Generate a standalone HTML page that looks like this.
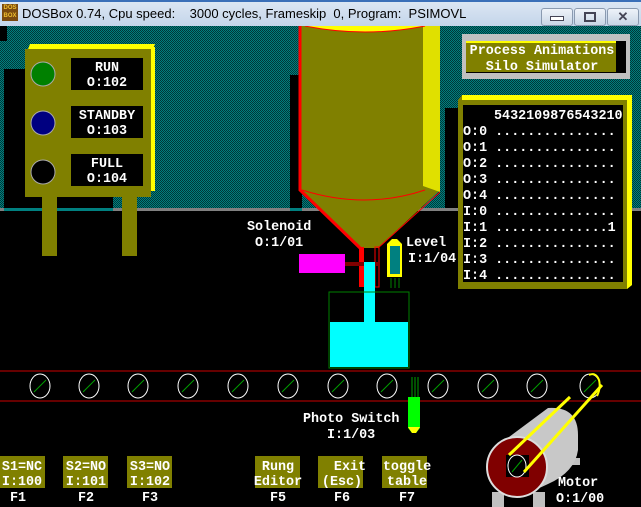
<!DOCTYPE html>
<html><head><style>
html,body{margin:0;padding:0;background:#000;width:641px;height:507px;overflow:hidden}
#tb{position:absolute;left:0;top:0;width:641px;height:26px;background:linear-gradient(#dbe6f3,#c4d5ea);border-top:2px solid #3a6fb8;box-sizing:border-box;font-family:"Liberation Sans",sans-serif;font-size:13px;color:#000}
svg text{font-family:"Liberation Mono",monospace;font-weight:bold;fill:#fff;font-size:13.4px}
.b{position:absolute;top:6px;width:30px;height:16px;border:1px solid #8a9ab0;border-radius:3px;background:linear-gradient(#eef3f9,#c9d6e6)}
</style></head><body>
<div id="tb">
<div style="position:absolute;left:2px;top:2px;width:16px;height:17px;background:#7a4a10;color:#f0c030;font-size:6px;line-height:8px;text-align:center;font-weight:bold">DOS<br>BOX</div>
<div style="position:absolute;left:22px;top:4px;white-space:pre">DOSBox 0.74, Cpu speed:    3000 cycles, Frameskip  0, Program:  PSIMOVL</div>
<div class="b" style="left:541px"><div style="margin:7px auto;width:12px;height:3px;border:1px solid #445;background:#fff"></div></div>
<div class="b" style="left:574px"><div style="margin:3px auto;width:8px;height:6px;border:2px solid #445"></div></div>
<div class="b" style="left:607px;text-align:center;font-weight:bold;line-height:15px;color:#445">✕</div>
</div>
<svg width="641" height="481" viewBox="0 26 641 481" style="position:absolute;left:0;top:26px">
<defs><pattern id="d" width="2" height="2" patternUnits="userSpaceOnUse"><rect width="2" height="2" fill="#008080"/><rect width="1" height="1" fill="#003838"/><rect x="1" y="1" width="1" height="1" fill="#003838"/></pattern></defs>
<rect x="0" y="26" width="641" height="184" fill="url(#d)"/>
<rect x="0" y="26" width="7" height="15" fill="#000"/>
<rect x="4" y="69" width="109" height="141" fill="#000"/>
<rect x="290" y="75" width="12" height="135" fill="#000"/>
<rect x="445" y="108" width="20" height="102" fill="#000"/>
<rect x="0" y="208" width="641" height="3" fill="#808080"/>
<rect x="4" y="208" width="109" height="3" fill="#008080"/><rect x="290" y="208" width="12" height="3" fill="#008080"/>
<!-- sign -->
<rect x="42" y="196" width="15" height="60" fill="#808000"/><rect x="122" y="196" width="15" height="60" fill="#808000"/>
<polygon points="25,57 30,44 155,44 150,57" fill="#ffff00"/>
<rect x="150" y="47" width="5" height="144" fill="#ffff00"/>
<rect x="25" y="49" width="126" height="148" fill="#808000"/>
<circle cx="43" cy="74" r="12" fill="#008000" stroke="#aaa"/>
<circle cx="43" cy="123" r="12" fill="#000080" stroke="#aaa"/>
<circle cx="43" cy="172" r="12" fill="#000" stroke="#aaa"/>
<rect x="71" y="58" width="72" height="32" fill="#000"/><rect x="71" y="106" width="72" height="32" fill="#000"/><rect x="71" y="154" width="72" height="32" fill="#000"/>
<text x="107" y="71" text-anchor="middle">RUN</text><text x="107" y="86" text-anchor="middle">O:102</text>
<text x="107" y="119" text-anchor="middle">STANDBY</text><text x="107" y="134" text-anchor="middle">O:103</text>
<text x="107" y="167" text-anchor="middle">FULL</text><text x="107" y="182" text-anchor="middle">O:104</text>
<!-- silo -->
<polygon points="300,26 440,26 440,190 378,248 360,248 300,190" fill="#808000"/>
<polygon points="423,26 440,26 440,192 423,186" fill="#e0e000"/>
<path d="M300,26 L300,190 L360,248" stroke="#ff0000" stroke-width="3" fill="none"/>
<path d="M440,192 L378,248" stroke="#ff0000" stroke-width="1" fill="none"/>
<path d="M302,190 Q365,210 425,190" stroke="#ff0000" fill="none"/>
<path d="M305,26 Q365,38 425,26" fill="#ffff00" stroke="#ff0000"/>
<rect x="359" y="247" width="5" height="40" fill="#ff0000"/>
<rect x="375" y="247" width="4" height="40" fill="none" stroke="#ff0000"/>
<rect x="299" y="254" width="46" height="19" fill="#ff00ff"/>
<rect x="345" y="262" width="34" height="4" fill="#800000"/>
<rect x="364" y="262" width="11" height="60" fill="#00ffff"/>
<rect x="329" y="292" width="80" height="76" fill="none" stroke="#008000"/>
<rect x="330" y="322" width="78" height="45" fill="#00ffff"/>
<polygon points="387,244 392,239 397,239 402,244 402,277 387,277" fill="#ffff00"/>
<rect x="390" y="246" width="10" height="28" fill="#008080"/>
<path d="M391,278v10M395,278v10M399,278v10" stroke="#008000"/>
<text x="247" y="230">Solenoid</text><text x="255" y="246">O:1/01</text>
<text x="406" y="246">Level</text><text x="408" y="262">I:1/04</text>
<!-- title -->
<rect x="462" y="34" width="168" height="45" fill="#c0c0c0"/>
<rect x="466" y="41" width="160" height="32" fill="#000"/>
<rect x="466" y="41" width="150" height="31" fill="#808000"/>
<rect x="466" y="41" width="150" height="2" fill="#ffff00"/>
<text x="542" y="54" text-anchor="middle">Process Animations</text>
<text x="542" y="70" text-anchor="middle">Silo Simulator</text>
<!-- io -->
<polygon points="458,100 462,95 632,95 632,285 627,289 458,289" fill="#808000"/>
<polygon points="627,100 632,95 632,285 627,289" fill="#ffff00"/><rect x="462" y="95" width="170" height="5" fill="#ffff00"/>
<rect x="463" y="105" width="160" height="177" fill="#000"/>
<text x="494" y="119">5432109876543210</text>
<text x="463" y="135" xml:space="preserve">O:0 ...............</text>
<text x="463" y="151" xml:space="preserve">O:1 ...............</text>
<text x="463" y="167" xml:space="preserve">O:2 ...............</text>
<text x="463" y="183" xml:space="preserve">O:3 ...............</text>
<text x="463" y="199" xml:space="preserve">O:4 ...............</text>
<text x="463" y="215" xml:space="preserve">I:0 ...............</text>
<text x="463" y="231" xml:space="preserve">I:1 ..............1</text>
<text x="463" y="247" xml:space="preserve">I:2 ...............</text>
<text x="463" y="263" xml:space="preserve">I:3 ...............</text>
<text x="463" y="279" xml:space="preserve">I:4 ...............</text>
<!-- conveyor -->
<path d="M0,371H641M0,401H641" stroke="#cc0000"/>
<g fill="none" stroke="#fff">
<ellipse cx="40" cy="386" rx="10" ry="12"/><ellipse cx="89" cy="386" rx="10" ry="12"/><ellipse cx="138" cy="386" rx="10" ry="12"/><ellipse cx="188" cy="386" rx="10" ry="12"/><ellipse cx="238" cy="386" rx="10" ry="12"/><ellipse cx="288" cy="386" rx="10" ry="12"/><ellipse cx="338" cy="386" rx="10" ry="12"/><ellipse cx="387" cy="386" rx="10" ry="12"/><ellipse cx="438" cy="386" rx="10" ry="12"/><ellipse cx="488" cy="386" rx="10" ry="12"/><ellipse cx="537" cy="386" rx="10" ry="12"/><ellipse cx="590" cy="386" rx="10" ry="12"/>
</g>
<g stroke="#00a000"><path d="M34,392L46,380M83,392L95,380M132,392L144,380M182,392L194,380M232,392L244,380M282,392L294,380M332,392L344,380M381,392L393,380M432,392L444,380M482,392L494,380M531,392L543,380M584,392L596,380"/><path d="M412,377v23M415,377v23M418,377v23"/></g>
<path d="M589,375 Q596,372 599,380 Q601,388 597,396" stroke="#ffff00" stroke-width="2" fill="none"/>
<polygon points="408,397 420,397 420,428 416,433 412,433 408,428" fill="#00ff00"/>
<polygon points="408,427 420,427 416,433 412,433" fill="#ffff00"/>
<text x="303" y="422">Photo Switch</text><text x="327" y="438">I:1/03</text>
<!-- motor -->
<rect x="492" y="492" width="12" height="15" fill="#c0c0c0"/><rect x="533" y="492" width="12" height="15" fill="#c0c0c0"/><rect x="570" y="458" width="10" height="7" fill="#c0c0c0"/>
<path d="M505,440 L548,408 Q578,406 578,435 L578,450 Q575,472 548,484 L520,497 Z" fill="#c8c8c8"/>
<ellipse cx="517" cy="467" rx="30" ry="30" fill="#800000" stroke="#ddd" stroke-width="2"/>
<rect x="506" y="455" width="23" height="22" fill="#000"/>
<ellipse cx="517" cy="466" rx="9" ry="11" fill="none" stroke="#fff"/>
<path d="M512,472 L522,460" stroke="#00a000"/>
<path d="M509,455 L570,397 M524,472 L602,385" stroke="#ffff00" stroke-width="3"/>
<text x="558" y="486">Motor</text><text x="556" y="502">O:1/00</text>
<!-- buttons -->
<g fill="#808000"><rect x="0" y="456" width="45" height="32"/><rect x="63" y="456" width="45" height="32"/><rect x="127" y="456" width="45" height="32"/><rect x="255" y="456" width="45" height="32"/><rect x="318" y="456" width="45" height="32"/><rect x="382" y="456" width="45" height="32"/></g>
<text x="22" y="470" text-anchor="middle">S1=NC</text><text x="22" y="485" text-anchor="middle">I:100</text><text x="18" y="501" text-anchor="middle">F1</text>
<text x="86" y="470" text-anchor="middle">S2=NO</text><text x="86" y="485" text-anchor="middle">I:101</text><text x="86" y="501" text-anchor="middle">F2</text>
<text x="150" y="470" text-anchor="middle">S3=NO</text><text x="150" y="485" text-anchor="middle">I:102</text><text x="150" y="501" text-anchor="middle">F3</text>
<text x="278" y="470" text-anchor="middle">Rung</text><text x="278" y="485" text-anchor="middle">Editor</text><text x="278" y="501" text-anchor="middle">F5</text>
<text x="350" y="470" text-anchor="middle">Exit</text><text x="342" y="485" text-anchor="middle">(Esc)</text><text x="342" y="501" text-anchor="middle">F6</text>
<text x="407" y="470" text-anchor="middle">toggle</text><text x="407" y="485" text-anchor="middle">table</text><text x="407" y="501" text-anchor="middle">F7</text>
</svg>
</body></html>
